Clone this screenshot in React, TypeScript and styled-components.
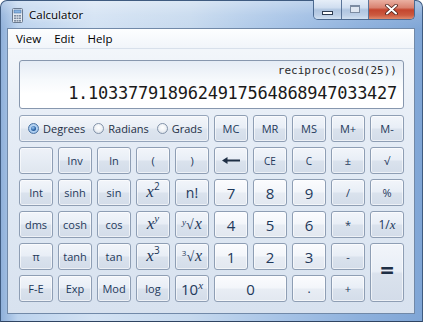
import React from 'react';
import styled, { createGlobalStyle, css } from 'styled-components';

const UI = '"Open Sans", "Noto Sans", "Liberation Sans", sans-serif';
const MONO = '"DejaVu Sans Mono", "Liberation Mono", monospace';
const SERIF = '"Liberation Serif", "DejaVu Serif", serif';

const GlobalStyle = createGlobalStyle`
  html, body { margin: 0; padding: 0; background: #ffffff; }
  #root { width: 423px; height: 322px; }
`;

const Window = styled.div`
  box-sizing: border-box;
  width: 423px;
  height: 322px;
  display: flex;
  flex-direction: column;
  border: 1px solid #3f5b80;
  border-bottom-color: #2f4462;
  border-radius: 7px 7px 0 0;
  padding: 0 7px 7px 6px;
  background:
    linear-gradient(180deg, rgba(255,255,255,0.35) 0px, rgba(255,255,255,0.1) 14px, rgba(255,255,255,0) 28px),
    linear-gradient(90deg, #8fb0da 0%, #bcd3ee 4%, #d3e2f3 22%, #c6d9ee 45%, #a9c5e7 65%, #8eb1dd 85%, #80a6d6 100%);
`;

const TitleBar = styled.div`
  height: 27px;
  flex: none;
  display: flex;
  align-items: flex-start;
  padding-left: 5px;
`;

const AppIcon = styled.svg`
  margin-top: 7px;
  flex: none;
`;

const Title = styled.span`
  margin: 6px 0 0 6px;
  font: 11.5px/16px ${UI};
  color: #000;
  text-shadow: 0 0 6px rgba(255,255,255,0.95), 0 0 2px rgba(255,255,255,0.9);
`;

const Caption = styled.div`
  margin-left: auto;
  margin-top: -1px;
  box-sizing: border-box;
  height: 20px;
  display: flex;
  border: 1px solid #4c6a90;
  border-top: none;
  border-radius: 0 0 5px 5px;
  overflow: hidden;
`;

const CapBtn = styled.div<{ $w: number; $close?: boolean }>`
  box-sizing: border-box;
  width: ${p => p.$w}px;
  display: flex;
  align-items: center;
  justify-content: center;
  background: ${p => p.$close
    ? 'linear-gradient(180deg, #eab0a2 0%, #d98371 40%, #c4452e 52%, #cc5a40 80%, #df8a6c 100%)'
    : 'linear-gradient(180deg, #e6eef8 0%, #d0def0 40%, #afc5e0 52%, #bccfe6 80%, #d2e1f1 100%)'};
  & + & { border-left: 1px solid #5a7599; }
`;

const MinGlyph = styled.div`
  width: 9px;
  height: 2px;
  margin-top: 6px;
  background: #fff;
  border: 1px solid #2e3d52;
`;

const MaxGlyph = styled.div`
  width: 8px;
  height: 5px;
  margin-top: -1px;
  background: #dfe7f1;
  border: 1px solid #7c8ca2;
  border-top-width: 2px;
`;

const Client = styled.div`
  flex: 1;
  display: flex;
  flex-direction: column;
  border: 1px solid #7189a8;
  background: linear-gradient(180deg, #f6f9fc 0%, #e9eff7 25%, #dfe8f3 60%, #d8e2ef 100%);
`;

const MenuBar = styled.div`
  height: 20px;
  flex: none;
  box-sizing: border-box;
  display: flex;
  align-items: center;
  gap: 13px;
  padding-left: 8px;
  background: linear-gradient(180deg, #fdfeff 0%, #f1f5fa 100%);
  border-bottom: 1px solid #d8e0eb;
  font: 11.5px/16px ${UI};
  color: #000;
`;

const Body = styled.div`
  flex: 1;
  display: flex;
  flex-direction: column;
  gap: 6px;
  padding: 11px 10px 11px 11px;
`;

const Display = styled.div`
  box-sizing: border-box;
  height: 49px;
  display: flex;
  flex-direction: column;
  align-items: flex-end;
  padding: 3px 6px 0 0;
  border: 1px solid #8797ae;
  border-radius: 3px;
  background: linear-gradient(180deg, #e5ecf5 0%, #f6f9fc 40%, #ffffff 70%);
`;

const Expr = styled.div`
  font: 11px/14px ${MONO};
  color: #2b2b2b;
`;

const Value = styled.div`
  margin-top: 5px;
  font: 17px/20px ${MONO};
  letter-spacing: -0.27px;
  color: #1a1a1a;
  white-space: nowrap;
`;

const Grid = styled.div`
  display: grid;
  grid-template-columns: repeat(10, 34px);
  grid-auto-rows: 27px;
  gap: 5px;
`;

const RadioGroup = styled.div`
  grid-column: span 5;
  box-sizing: border-box;
  display: flex;
  align-items: center;
  gap: 8px;
  padding-left: 8px;
  border: 1px solid #95a5bb;
  border-radius: 3px;
  background: linear-gradient(180deg, #f3f6fa 0%, #e9eef5 48%, #dde5ef 52%, #d7e0ec 100%);
  box-shadow: inset 0 0 0 1px rgba(255,255,255,0.55);
`;

const RadioItem = styled.label`
  display: flex;
  align-items: center;
  gap: 4px;
  font: 11px/14px ${UI};
  color: #1e2f45;
`;

const RadioDot = styled.span<{ $on?: boolean }>`
  box-sizing: border-box;
  width: 11px;
  height: 11px;
  border-radius: 50%;
  border: 1px solid #8393a9;
  background: radial-gradient(circle at 50% 40%, #ffffff 0%, #eef1f5 50%, #cdd5df 100%);
  display: flex;
  align-items: center;
  justify-content: center;
  &::after {
    content: '';
    width: 5px;
    height: 5px;
    border-radius: 50%;
    background: radial-gradient(circle at 40% 35%, #9fcaf3 0%, #2c66aa 55%, #123a6c 100%);
    display: ${p => (p.$on ? 'block' : 'none')};
  }
  ${p => p.$on && css`
    background: radial-gradient(circle at 50% 45%, #d8e9fa 0%, #a9cbef 60%, #7aa7d8 100%);
    border-color: #4c74a3;
  `}
`;

type Variant = 'fn' | 'digit' | 'blank';

const Btn = styled.button<{ $v?: Variant; $fs?: number; $cols?: number; $rows?: number }>`
  box-sizing: border-box;
  margin: 0;
  padding: 0;
  min-width: 0;
  display: flex;
  align-items: center;
  justify-content: center;
  white-space: nowrap;
  border: 1px solid #8e9eb4;
  border-radius: 3px;
  font-family: ${UI};
  font-size: ${p => p.$fs ?? 11}px;
  color: #1e395b;
  box-shadow: inset 0 0 0 1px rgba(255,255,255,0.6);
  background: ${p =>
    p.$v === 'digit'
      ? 'linear-gradient(180deg, #fbfcfe 0%, #f3f6fa 48%, #e8edf4 52%, #e2e8f0 100%)'
      : p.$v === 'blank'
      ? 'linear-gradient(180deg, #eef2f8 0%, #e6ecf4 50%, #dfe6ef 100%)'
      : 'linear-gradient(180deg, #f2f5fa 0%, #e8eef6 48%, #dae2ed 52%, #d3dce9 100%)'};
  ${p => p.$cols && css`grid-column: span ${p.$cols};`}
  ${p => p.$rows && css`grid-row: span ${p.$rows};`}
`;

const Face = styled.span`
  display: inline-block;
  line-height: 16px;
  white-space: nowrap;
`;

const Ix = styled.span<{ $fs?: number }>`
  font-family: ${SERIF};
  font-style: italic;
  font-size: ${p => p.$fs ?? 17}px;
`;

const Sup = styled.span<{ $fs?: number; $it?: boolean; $up?: number }>`
  font-size: ${p => p.$fs ?? 10}px;
  vertical-align: ${p => p.$up ?? 7}px;
  line-height: 0;
  ${p => p.$it && css`font-family: ${SERIF}; font-style: italic;`}
`;

const Rad = styled.span`
  font-family: ${SERIF};
  font-size: 14px;
  margin-right: 1px;
`;

const Eq = styled.span`
  font-family: ${UI};
  font-weight: 700;
  font-size: 24px;
  color: #1e2f45;
`;

type Spec = { label: React.ReactNode; v?: Variant; fs?: number; cols?: number; rows?: number };

const BackArrow = () => (
  <svg width="20" height="9" viewBox="0 0 20 9" style={{ display: 'block' }}>
    <path d="M1 4.5 L6.5 1 L6.5 8 Z" fill="#1e2f45" />
    <rect x="5" y="3.5" width="14" height="2" fill="#1e2f45" />
  </svg>
);

const memory: Spec[] = [
  { label: 'MC' }, { label: 'MR' }, { label: 'MS' }, { label: 'M+' }, { label: 'M-' },
];

const keys: Spec[] = [
  { label: '', v: 'blank' },
  { label: 'Inv' },
  { label: 'ln' },
  { label: '(' },
  { label: ')' },
  { label: <BackArrow /> },
  { label: 'CE', fs: 10 },
  { label: 'C', fs: 10 },
  { label: '±', fs: 11 },
  { label: '√', fs: 11 },

  { label: 'Int' },
  { label: 'sinh' },
  { label: 'sin' },
  { label: <><Ix>x</Ix><Sup>2</Sup></> },
  { label: 'n!', fs: 14 },
  { label: '7', v: 'digit', fs: 15 },
  { label: '8', v: 'digit', fs: 15 },
  { label: '9', v: 'digit', fs: 15 },
  { label: '/', fs: 11 },
  { label: '%', fs: 11 },

  { label: 'dms' },
  { label: 'cosh' },
  { label: 'cos' },
  { label: <><Ix>x</Ix><Sup $it $fs={11}>y</Sup></> },
  { label: <><Sup $it $fs={9} $up={4}>y</Sup><Rad>√</Rad><Ix $fs={16}>x</Ix></> },
  { label: '4', v: 'digit', fs: 15 },
  { label: '5', v: 'digit', fs: 15 },
  { label: '6', v: 'digit', fs: 15 },
  { label: '*', fs: 11 },
  { label: <>1/<Ix $fs={13}>x</Ix></>, fs: 12 },

  { label: 'π' },
  { label: 'tanh' },
  { label: 'tan' },
  { label: <><Ix>x</Ix><Sup>3</Sup></> },
  { label: <><Sup $fs={8} $up={5}>3</Sup><Rad>√</Rad><Ix $fs={16}>x</Ix></> },
  { label: '1', v: 'digit', fs: 15 },
  { label: '2', v: 'digit', fs: 15 },
  { label: '3', v: 'digit', fs: 15 },
  { label: '-', fs: 11 },
  { label: <Eq>=</Eq>, rows: 2 },

  { label: 'F-E' },
  { label: 'Exp' },
  { label: 'Mod' },
  { label: 'log' },
  { label: <>10<Sup $it $fs={11} $up={6}>x</Sup></>, fs: 15 },
  { label: '0', v: 'digit', fs: 15, cols: 2 },
  { label: '.', v: 'digit', fs: 12 },
  { label: '+', fs: 11 },
];

const renderKey = (k: Spec, i: number) => (
  <Btn key={i} $v={k.v} $fs={k.fs} $cols={k.cols} $rows={k.rows}>
    <Face>{k.label}</Face>
  </Btn>
);

export default function App() {
  return (
    <>
      <GlobalStyle />
      <Window>
        <TitleBar>
          <AppIcon width="11" height="15" viewBox="0 0 11 15">
            <rect x="0.5" y="0.5" width="10" height="14" rx="1" fill="#e4eaf2" stroke="#6b7b90" />
            <rect x="2" y="2" width="7" height="3" fill="#86b3e3" stroke="#4a76a6" strokeWidth="0.6" />
            {[7, 9.5, 12].map(y =>
              [2, 4.5, 7].map(x => (
                <rect key={`${x}-${y}`} x={x} y={y} width="2" height="1.6" fill="#7d8ca0" />
              ))
            )}
          </AppIcon>
          <Title>Calculator</Title>
          <Caption>
            <CapBtn $w={27}><MinGlyph /></CapBtn>
            <CapBtn $w={27}><MaxGlyph /></CapBtn>
            <CapBtn $w={46} $close>
              <svg width="13" height="11" viewBox="0 0 13 11">
                <path d="M2 1.5 L11 9.5 M11 1.5 L2 9.5" stroke="#4a1f18" strokeWidth="3.6" strokeLinecap="round" />
                <path d="M2 1.5 L11 9.5 M11 1.5 L2 9.5" stroke="#ffffff" strokeWidth="2" strokeLinecap="round" />
              </svg>
            </CapBtn>
          </Caption>
        </TitleBar>
        <Client>
          <MenuBar>
            <span>View</span>
            <span>Edit</span>
            <span>Help</span>
          </MenuBar>
          <Body>
            <Display>
              <Expr>reciproc(cosd(25))</Expr>
              <Value>1.1033779189624917564868947033427</Value>
            </Display>
            <Grid>
              <RadioGroup>
                <RadioItem><RadioDot $on />Degrees</RadioItem>
                <RadioItem><RadioDot />Radians</RadioItem>
                <RadioItem><RadioDot />Grads</RadioItem>
              </RadioGroup>
              {memory.map(renderKey)}
              {keys.map((k, i) => renderKey(k, i + 10))}
            </Grid>
          </Body>
        </Client>
      </Window>
    </>
  );
}
